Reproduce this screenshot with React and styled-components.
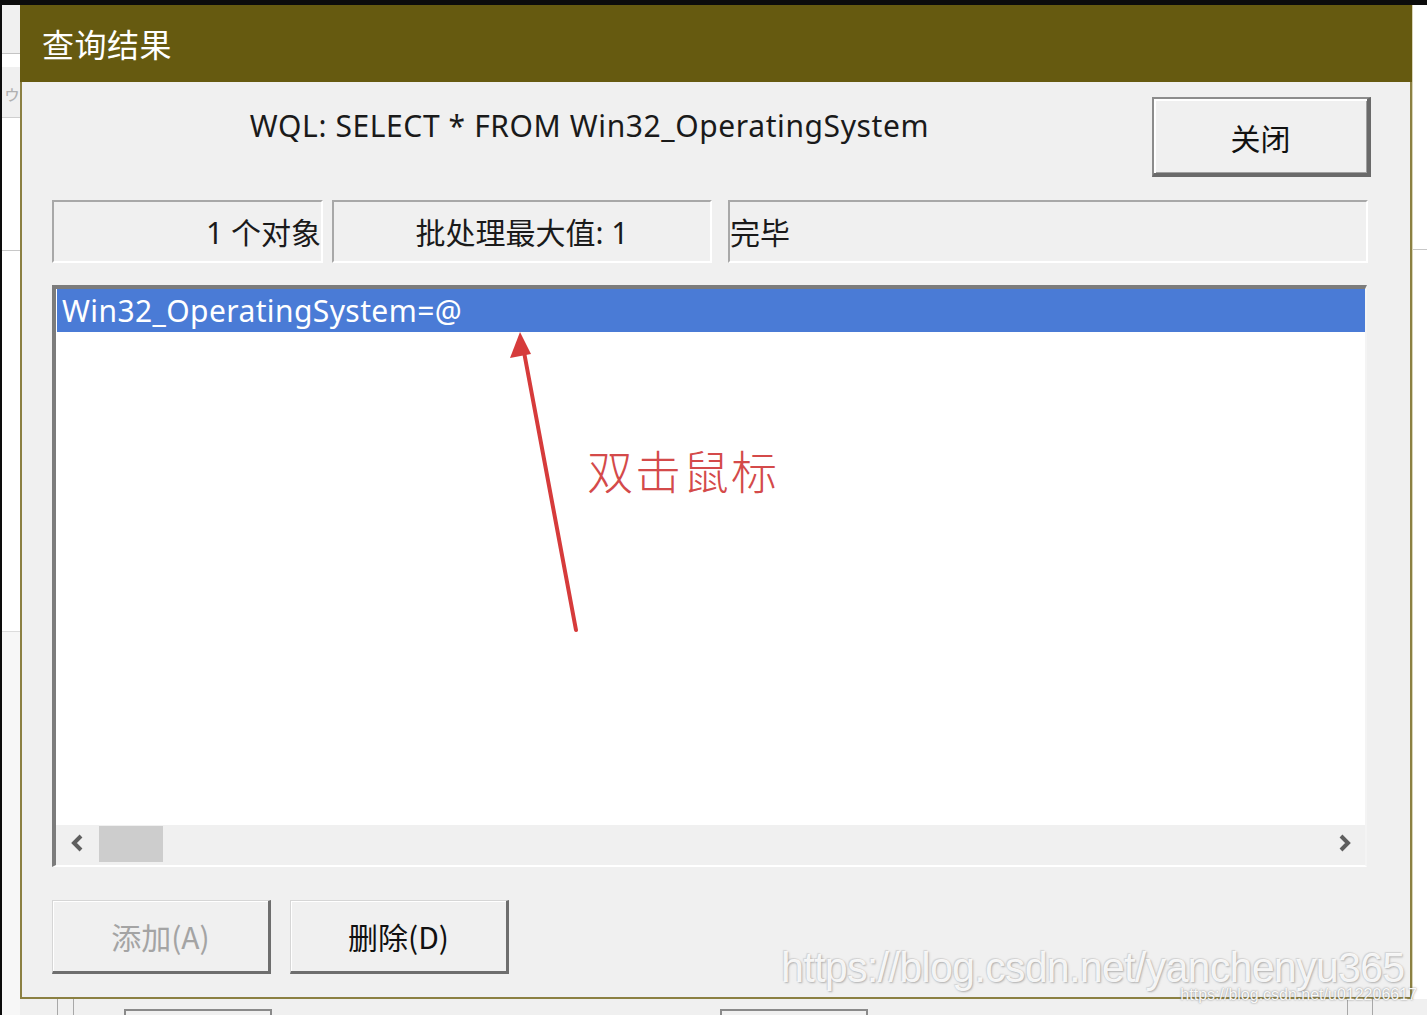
import React from "react";
import styled, { createGlobalStyle } from "styled-components";

const Global = createGlobalStyle`
  html, body { margin: 0; padding: 0; background: #0c0c0c; }
  body { width: 1427px; height: 1015px; overflow: hidden; }
`;

const UI = `"Noto Sans", "Noto Sans CJK SC", sans-serif`;

const Page = styled.div`
  position: relative;
  width: 1427px;
  height: 1015px;
  display: grid;
  grid-template-columns: 2px 18px 1392px 15px;
  grid-template-rows: 5px 994px 16px;
  background: #0c0c0c;
  overflow: hidden;
  font-family: ${UI};
`;

const TopStrip = styled.div`
  grid-column: 1 / 5;
  grid-row: 1;
  background: #0c0c0c;
`;

const LeftBg = styled.div`
  grid-column: 2;
  grid-row: 2 / 4;
  display: flex;
  flex-direction: column;
  overflow: hidden;
`;

const LeftSection = styled.div`
  height: ${(p) => p.$h}px;
  background: ${(p) => p.$bg || "#fff"};
  border-bottom: ${(p) => (p.$line ? `1px solid ${p.$line}` : "none")};
  flex: ${(p) => (p.$grow ? 1 : "none")};
  display: flex;
  align-items: center;
  justify-content: flex-start;
  overflow: hidden;
`;

const LeftGlyph = styled.span`
  font-family: "Noto Sans CJK JP", sans-serif;
  font-size: 18px;
  line-height: 1;
  color: #b0b0b0;
  padding-left: 1px;
`;

const RightBg = styled.div`
  grid-column: 4;
  grid-row: 2;
  background: #fff;
  border-left: 1px solid #d8d4b8;
  display: flex;
  flex-direction: column;
`;

const RightLine = styled.div`
  margin-top: 244px;
  height: 1px;
  background: #c8c8c8;
`;

const BottomStrip = styled.div`
  grid-column: 3 / 5;
  grid-row: 3;
  background: #f0f0f0;
  display: flex;
  align-items: stretch;
`;

const VLine = styled.div`
  width: 1px;
  margin-left: ${(p) => p.$ml}px;
  background: #a8a8a8;
`;

const StubButton = styled.div`
  width: ${(p) => p.$w}px;
  margin-left: ${(p) => p.$ml}px;
  margin-top: 10px;
  border-top: 2px solid #8a8a8a;
  border-left: 2px solid #8a8a8a;
  border-right: 2px solid #8a8a8a;
  background: #f0f0f0;
`;

const Dialog = styled.div`
  grid-column: 3;
  grid-row: 2;
  display: flex;
  flex-direction: column;
  background: #f0f0f0;
  border-left: 2px solid #8b8042;
  border-right: 2px solid #8b8042;
  border-bottom: 2px solid #8b8042;
  box-sizing: border-box;
`;

const TitleBar = styled.div`
  height: 77px;
  flex: none;
  background: #665a10;
  display: flex;
  align-items: center;
  margin: 0 -2px;
  padding-left: 22px;
`;

const TitleText = styled.span`
  color: #ffffff;
  font-family: "Noto Sans CJK SC", sans-serif;
  font-size: 32px;
  letter-spacing: 0.5px;
  margin-top: -2px;
`;

const Body = styled.div`
  flex: 1;
  display: flex;
  flex-direction: column;
  padding: 15px 42px 0 30px;
`;

const HeaderRow = styled.div`
  display: flex;
  align-items: flex-start;
  gap: 23px;
  height: 80px;
`;

const QueryText = styled.div`
  flex: 1;
  text-align: center;
  font-family: ${UI};
  font-size: 30px;
  letter-spacing: 0.6px;
  line-height: 1;
  color: #1a1a1a;
  padding-top: 14px;
  padding-right: 2px;
`;

const CloseButton = styled.button`
  width: 219px;
  height: 80px;
  margin-right: -3px;
  box-sizing: border-box;
  background: #f0f0f0;
  border-style: solid;
  border-width: 2px 4px 4px 2px;
  border-color: #8c8c8c #6a6a6a #6a6a6a #8c8c8c;
  box-shadow: inset 2px 2px 0 #ffffff, inset -1px -1px 0 #a0a0a0;
  font-family: "Noto Sans CJK SC", sans-serif;
  font-size: 30px;
  color: #111;
  padding: 0;
  padding-top: 2px;
`;

const StatusRow = styled.div`
  display: flex;
  margin-top: 23px;
  height: 63px;
`;

const StatusPanel = styled.div`
  box-sizing: border-box;
  width: ${(p) => (p.$w ? `${p.$w}px` : "auto")};
  flex: ${(p) => (p.$w ? "none" : 1)};
  margin-left: ${(p) => p.$ml || 0}px;
  border-style: solid;
  border-width: 2px;
  border-color: #a8a8a8 #ffffff #ffffff #a8a8a8;
  display: flex;
  align-items: center;
  justify-content: ${(p) => p.$justify};
  padding: 0 0 2px 0;
  font-family: ${UI};
  font-size: 30px;
  color: #1a1a1a;
  white-space: nowrap;
`;

const ListBox = styled.div`
  margin-top: 22px;
  height: 582px;
  box-sizing: border-box;
  margin-right: 1px;
  border-style: solid;
  border-width: 4px 2px 2px 4px;
  border-color: #7c7c7c #f4f4f4 #ffffff #7c7c7c;
  background: #fff;
  display: flex;
  flex-direction: column;
`;

const SelectedRow = styled.div`
  height: 43px;
  margin-left: 1px;
  background: #4a7bd6;
  color: #fff;
  display: flex;
  align-items: center;
  padding-left: 5px;
  font-family: ${UI};
  font-size: 30px;
  letter-spacing: 0.4px;
  padding-bottom: 1px;
  box-sizing: border-box;
`;

const ListSpace = styled.div`
  flex: 1;
`;

const HScroll = styled.div`
  height: 40px;
  flex: none;
  background: #f0f0f0;
  display: flex;
  align-items: stretch;
`;

const ArrowSlot = styled.div`
  width: ${(p) => p.$w}px;
  display: flex;
  align-items: center;
  justify-content: ${(p) => p.$justify};
  padding: ${(p) => p.$pad};
`;

const Thumb = styled.div`
  width: 64px;
  margin: 1px 0 3px;
  background: #cdcdcd;
`;

const Track = styled.div`
  flex: 1;
`;

const ButtonRow = styled.div`
  display: flex;
  gap: 19px;
  margin-top: 33px;
`;

const CmdButton = styled.button`
  width: 219px;
  height: 74px;
  box-sizing: border-box;
  background: #f0f0f0;
  border-style: solid;
  border-width: 1px 3px 3px 1px;
  border-color: #d6d6d6 #6e6e6e #6e6e6e #d6d6d6;
  box-shadow: inset 1px 1px 0 #ffffff;
  font-family: "Noto Sans CJK SC", sans-serif;
  font-size: 30px;
  color: ${(p) => (p.disabled ? "#a4a4a4" : "#111")};
  padding: 0;
`;

const Annotation = styled.div`
  position: absolute;
  left: 587px;
  top: 444px;
  font-family: "Noto Sans CJK SC", sans-serif;
  font-weight: 300;
  font-size: 46px;
  line-height: 1.1;
  color: #d44a4a;
  letter-spacing: 2px;
`;

const ArrowSvg = styled.svg`
  position: absolute;
  left: 0;
  top: 0;
  pointer-events: none;
`;

const Watermark = styled.div`
  position: absolute;
  right: 22px;
  top: 946px;
  font-family: "Liberation Sans Narrow", "Liberation Sans", Arial, sans-serif;
  font-size: 43px;
  line-height: 1;
  color: rgba(255, 255, 255, 0.9);
  text-shadow: 1px 1px 2px rgba(120, 120, 120, 0.55), -1px -1px 1px rgba(150, 150, 150, 0.3);
  transform: scaleX(0.945);
  transform-origin: right top;
  white-space: nowrap;
  letter-spacing: -0.5px;
`;

const SmallMark = styled.div`
  position: absolute;
  right: 10px;
  top: 987px;
  font-family: "Liberation Sans Narrow", "Liberation Sans", Arial, sans-serif;
  font-size: 16px;
  line-height: 1;
  color: rgba(255, 255, 255, 0.95);
  text-shadow: 0 0 2px rgba(90, 90, 90, 0.8);
  white-space: nowrap;
`;

const Chevron = ({ dir }) => (
  <svg width="16" height="18" viewBox="0 0 16 18">
    <path
      d={dir === "left" ? "M11 2 L4 9 L11 16" : "M5 2 L12 9 L5 16"}
      fill="none"
      stroke="#5f5f5f"
      strokeWidth="4"
      strokeLinejoin="miter"
    />
  </svg>
);

export default function App() {
  return (
    <>
      <Global />
      <Page>
        <TopStrip />
        <LeftBg>
          <LeftSection $h={48} $bg="#f0f0f0" $line="#c4c4c4" />
          <LeftSection $h={13} $bg="#ffffff" />
          <LeftSection $h={50} $bg="#f0f0f0" $line="#cfcfcf">
            <LeftGlyph>ゥ</LeftGlyph>
          </LeftSection>
          <LeftSection $h={132} $bg="#ffffff" $line="#c8c8c8" />
          <LeftSection $h={380} $bg="#ffffff" $line="#dcdcdc" />
          <LeftSection $grow $bg="#f7f7f7" />
        </LeftBg>
        <Dialog>
          <TitleBar>
            <TitleText>查询结果</TitleText>
          </TitleBar>
          <Body>
            <HeaderRow>
              <QueryText>WQL: SELECT * FROM Win32_OperatingSystem</QueryText>
              <CloseButton>关闭</CloseButton>
            </HeaderRow>
            <StatusRow>
              <StatusPanel $w={271} $justify="flex-end">1 个对象</StatusPanel>
              <StatusPanel $w={380} $ml={9} $justify="center">批处理最大值: 1</StatusPanel>
              <StatusPanel $ml={16} $justify="flex-start">完毕</StatusPanel>
            </StatusRow>
            <ListBox>
              <SelectedRow>Win32_OperatingSystem=@</SelectedRow>
              <ListSpace />
              <HScroll>
                <ArrowSlot $w={43} $justify="center" $pad="0 0 4px 0">
                  <Chevron dir="left" />
                </ArrowSlot>
                <Thumb />
                <Track />
                <ArrowSlot $w={43} $justify="center" $pad="0 0 4px 0">
                  <Chevron dir="right" />
                </ArrowSlot>
              </HScroll>
            </ListBox>
            <ButtonRow>
              <CmdButton disabled>添加(A)</CmdButton>
              <CmdButton>删除(D)</CmdButton>
            </ButtonRow>
          </Body>
        </Dialog>
        <RightBg>
          <RightLine />
        </RightBg>
        <BottomStrip>
          <VLine $ml={37} />
          <VLine $ml={15} />
          <StubButton $w={144} $ml={50} />
          <StubButton $w={144} $ml={448} />
          <VLine $ml={479} />
          <VLine $ml={24} />
        </BottomStrip>

        <ArrowSvg width="1427" height="1015" viewBox="0 0 1427 1015">
          <line x1="576" y1="630" x2="524" y2="352" stroke="#d63b3b" strokeWidth="4" strokeLinecap="round" />
          <polygon points="520,332 510,358 531,354" fill="#d63b3b" />
        </ArrowSvg>
        <Annotation>双击鼠标</Annotation>
        <Watermark>https://blog.csdn.net/yanchenyu365</Watermark>
        <SmallMark>https://blog.csdn.net/u012206617</SmallMark>
      </Page>
    </>
  );
}
